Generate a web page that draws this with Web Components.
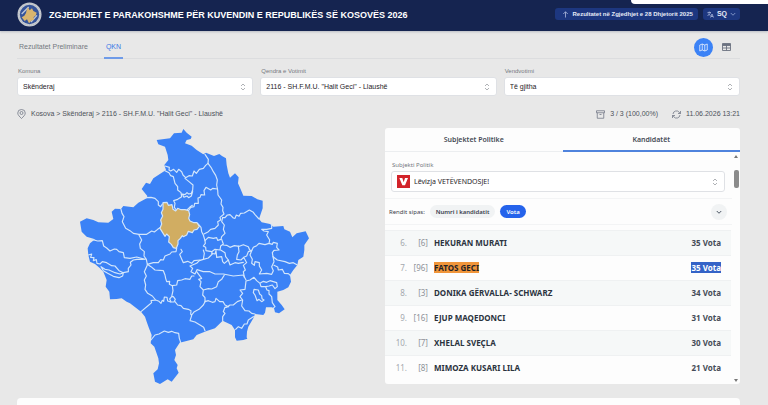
<!DOCTYPE html>
<html lang="sq">
<head>
<meta charset="utf-8">
<title>Zgjedhjet e Parakohshme për Kuvendin 2026</title>
<style>
html, body { margin: 0; height: 100%; }
body { background: #e8e8e8; font-family: "Liberation Sans", Arial, sans-serif; font-size: 7px; color: #4b5563; overflow: hidden; }
</style>
</head>
<body>
<results-page></results-page>

<template id="t-page">
<style>
:host { display: flex; flex-direction: column; min-height: 100vh; }
main { flex: 1; display: flex; flex-direction: column; padding: 0 28px 0 17px; }
.filters { display: grid; grid-template-columns: repeat(3, 1fr); gap: 7px; padding-top: 8px; }
.content { display: grid; grid-template-columns: 1fr 1fr; gap: 13px; }
.next { flex: 1; margin-top: 14px; background: #fdfdfd; border-radius: 4px 4px 0 0; min-height: 8px; }
.sheet { position: absolute; top: 0; right: 0; width: 137px; height: 4px; background: #fff; border-bottom-left-radius: 4px; }
</style>
<site-header></site-header>
<div class="sheet"></div>
<main>
  <view-tabs></view-tabs>
  <div class="filters">
    <filter-select label="Komuna" value="Skënderaj"></filter-select>
    <filter-select label="Qendra e Votimit" value='2116 - SH.F.M.U. "Halit Geci" - Llaushë'></filter-select>
    <filter-select label="Vendvotimi" value="Të gjitha"></filter-select>
  </div>
  <status-line></status-line>
  <div class="content">
    <kosovo-map></kosovo-map>
    <result-panel></result-panel>
  </div>
  <div class="next"></div>
</main>
</template>

<template id="t-header">
<style>
:host { display: flex; align-items: center; height: 31px; padding: 0 28px 0 17px; background: #152450; box-shadow: 0 1px 2px #8b90a080; box-sizing: border-box; color: #fff; }
.logo { width: 25px; height: 25px; flex: none; margin-top: -2px; }
h1 { flex: 1; margin: -2px 0 0 7px; font-size: 9px; line-height: 12px; font-weight: 700; white-space: nowrap; }
nav { display: flex; gap: 5px; margin-top: -3px; }
a, button { display: flex; align-items: center; height: 12px; box-sizing: border-box; border: 0; border-radius: 3px; background: #1d3780; color: #e6eaf5; text-decoration: none; font: 700 7px/12px "Liberation Sans", Arial, sans-serif; white-space: nowrap; }
a { padding: 0 5px 0 7px; gap: 4px; font-size: 6px; }
button { padding: 0 4px; gap: 3px; }
svg { flex: none; }
</style>
<svg class="logo" viewBox="0 0 75 75">
  <circle cx="37.500" cy="37.500" r="36" fill="#c9ccd0"/>
  <circle cx="37.500" cy="37.500" r="32" fill="none" stroke="#a3adbb" stroke-width="2" stroke-dasharray="3 3"/>
  <circle cx="37.500" cy="37.500" r="29" fill="#35549a"/>
  <path d="M14 36L35 15M60 40L42 60" stroke="#bcc6da" stroke-width="4"/>
  <path d="M33 16l5 9 7-6 4 8 10 5-3 9-6 4 1 8-8 3-7 8-6-12-7 5-9-11 8-5 5-8 2-9z" fill="#d9b56e"/>
</svg>
<h1>ZGJEDHJET E PARAKOHSHME PËR KUVENDIN E REPUBLIKËS SË KOSOVËS 2026</h1>
<nav>
  <a href="#2025"><svg width="7" height="7" viewBox="0 0 14 14" fill="none" stroke="#b9c4e4" stroke-width="1.500"><path d="M7 13V1.500M2.500 6L7 1.500 11.500 6"/></svg><span>Rezultatet në Zgjedhjet e 28 Dhjetorit 2025</span></a>
  <button type="button"><svg width="7" height="7" viewBox="0 0 14 14" fill="none" stroke="#b9c4e4" stroke-width="1.400"><path d="M1 3h7M4.500 1v2M7 3C6 6 4 8 1 9M2.500 5C4 7.500 5 8 7 9M7 13l3-7 3 7M8 11h4"/></svg><span>SQ</span><svg width="6" height="6" viewBox="0 0 12 12" fill="none" stroke="#9fb0dc" stroke-width="1.500"><path d="M1.500 4L6 8.500 10.500 4"/></svg></button>
</nav>
</template>

<template id="t-tabs">
<style>
:host { display: flex; align-items: stretch; height: 28px; box-sizing: border-box; border-bottom: 1px solid #dcdddf; }
a { display: flex; align-items: center; padding: 5px 2px 0; color: #74787f; text-decoration: none; font-size: 7px; line-height: 10px; border-bottom: 2px solid transparent; margin-bottom: -1px; box-sizing: border-box; white-space: nowrap; }
a + a { margin-left: 14px; }
a.on { color: #3b78e7; border-color: #6f9be8; }
.modes { margin-left: auto; display: flex; align-items: center; gap: 4px; padding: 5px 4px 0 0; }
button { width: 19px; height: 19px; border: 0; border-radius: 50%; padding: 0; display: grid; place-items: center; background: none; color: #6b7280; }
button.on { background: #3b82f6; color: #fff; }
</style>
<a href="#prelim">Rezultatet Preliminare</a>
<a href="#qkn" class="on">QKN</a>
<div class="modes">
  <button type="button" class="on" aria-label="Harta"><svg width="9" height="9" viewBox="0 0 18 18" fill="none" stroke="currentColor" stroke-width="1.400"><path d="M1.500 4l5-2 5 2 5-2v12l-5 2-5-2-5 2zM6.500 2v12M11.500 4v12"/></svg></button>
  <button type="button" aria-label="Tabela"><svg width="9" height="8" viewBox="0 0 18 16" fill="none" stroke="currentColor" stroke-width="1.800"><path d="M1 1h16v14H1zM1 5h16M1 10h16M9 2v13"/><path d="M1 3h16" stroke-width="3"/></svg></button>
</div>
</template>

<template id="t-select">
<style>
:host { display: flex; flex-direction: column; min-width: 0; --h: 19px; }
label { padding: 0 1px 2px; font-size: 6px; line-height: 8px; color: #74787f; }
.box { display: flex; align-items: center; gap: 4px; height: var(--h); box-sizing: border-box; padding: 0 6px 0 5px; background: #fff; border: 1px solid #dfe1e5; border-radius: 3px; }
select { flex: 1; min-width: 0; appearance: none; border: 0; padding: 0; margin: 0; background: none; color: #1f2328; font: inherit; font-size: 7px; line-height: 12px; }
svg { flex: none; }
</style>
<label for="s"></label>
<div class="box"><slot></slot><select id="s"><option></option></select><svg width="6" height="8" viewBox="0 0 12 16" fill="none" stroke="#8d9197" stroke-width="1.400"><path d="M2 6l4-4 4 4M2 10l4 4 4-4"/></svg></div>
</template>

<template id="t-status">
<style>
:host { display: flex; align-items: center; height: 32px; padding: 4px 0 0; box-sizing: border-box; font-size: 7px; line-height: 10px; color: #4c5159; white-space: nowrap; }
span { display: flex; align-items: center; gap: 5px; }
.right { margin-left: auto; gap: 14px; }
</style>
<span><svg width="9" height="10" viewBox="0 0 18 20" fill="none" stroke="#6b7280" stroke-width="1.500"><path d="M9 19C5 15 1.500 12 1.500 8a7.500 7 0 0 1 15 0c0 4-3.500 7-7.500 11z"/><circle cx="9" cy="8" r="3"/></svg>Kosova &gt; Skënderaj &gt; 2116 - SH.F.M.U. "Halit Geci" - Llaushë</span>
<span class="right">
  <span><svg width="9" height="9" viewBox="0 0 18 18" fill="none" stroke="#6b7280" stroke-width="1.500"><path d="M1 1.500h16v4H1zM2.500 5.500V16.500h13V5.500M7 9h4"/></svg>3 / 3 (100,00%)</span>
  <span><svg width="9" height="9" viewBox="0 0 18 18" fill="none" stroke="#6b7280" stroke-width="1.500"><path d="M2 8a7 7 0 0 1 12.500-3.500L17 7M17 2v5h-5M16 10a7 7 0 0 1-12.500 3.500L1 11M1 16v-5h5"/></svg>11.06.2026 13:21</span>
</span>
</template>

<template id="t-map">
<style>
:host { display: flex; justify-content: center; align-items: flex-start; }
svg { width: 240px; max-width: 100%; }
</style>
<svg viewBox="0 24 720 768" role="img" aria-label="Harta e komunave">
<path fill="#3b82f6" d="M325 27L335 38 350 50 347 57 335 60 330 70 350 77 365 90 385 103 393 98 417 108 433 102 441 108 453 115 455 135 460 160 465 173 480 160 491 172 489 190 497 208 505 227 530 228 547 238 563 242 563 265 552 297 560 307 585 312 595 320 625 318 628 328 645 335 652 352 665 340 692 334 702 355 688 375 688 390 685 410 670 420 667 435 655 450 645 465 648 485 640 502 625 510 607 515 607 540 620 555 629 568 612 580 600 577 597 565 590 562 573 562 570 578 565 585 540 582 535 595 520 620 516 635 515 652 517 656 505 660 485 662 480 652 480 630 470 615 443 602 420 625 395 633 365 645 355 658 320 667 315 667 300 690 303 705 298 720 308 735 305 745 311 758 290 785 278 778 255 792 240 785 235 760 248 748 252 730 250 715 238 680 227 670 230 645 222 625 215 605 210 590 198 575 165 550 155 545 140 535 125 537 105 538 103 515 92 500 95 480 85 455 75 445 60 432 45 425 40 405 38 385 45 370 60 358 35 350 20 335 15 305 35 295 55 300 70 307 100 308 115 297 110 275 120 266 138 267 145 258 175 262 190 248 215 235 217 228 200 207 213 188 225 192 235 175 265 155 273 150 268 135 280 120 278 105 270 80 250 73 245 60 285 55 297 40 320 38Z"/>
<g fill="none" stroke="#d3e6fb" stroke-width="3.500" stroke-linejoin="round" stroke-linecap="round">
<path d="M270 138L283 142 282 150 287 153 296 148 305 157 311 148 320 155 324 165 332 173 342 167 352 168 357 153 364 160 373 148 385 145 392 136 399 130 400 118 390 103"/>
<path d="M399 130L408 142 415 155 422 166 427 180 425 195 428 210 429 225 440 240 438 252 444 262 443 272 447 282 435 292 437 300 428 305 430 315 420 325 407 328 400 335 387 342"/>
<path d="M427 207L413 205 407 210 393 202 387 212 389 225 378 224 375 232 369 234 370 250 359 250 357 260 347 262 342 270"/>
<path d="M270 152L282 158 287 167 295 170 300 190 308 200 308 210 318 218 320 230 308 238 296 242 300 250 298 262 304 270M330 175L342 185 354 195 353 210 349 220 341 222 336 218 330 224 322 222M322 222L327 232 336 228 341 233 349 228 353 215"/>
<path d="M213 233L228 232 240 235 250 245 250 255 257 260 262 252M138 268L141 280 147 290 142 305 152 325 165 332 175 340 192 343 215 343 230 333 238 336 248 328 257 322M336 270L344 262 352 256"/>
<path d="M192 345L200 360 194 372 196 385 208 395 207 408 214 418 217 433M50 358L68 363 82 362 86 378 95 384 105 393 118 387 125 388 132 395 145 398 148 413 165 415 185 411 210 418M217 433L235 428 250 428 257 419 265 420 270 408 285 402 290 396 303 395 305 385"/>
<path d="M318 388L322 395 314 403 317 410 325 428 338 424 350 430 357 422 375 420M217 433L228 440 240 450 265 452 270 465 272 475 275 485 284 484 283 493 292 497 305 495 308 482 320 480 330 476 345 478 350 468 357 468M292 497L294 512 290 530M290 530L284 537 288 546 297 546 301 538 295 530Z"/>
<path d="M217 435L208 455 214 468 208 480 212 495 210 508 218 520 232 528 242 540 228 542 230 548 218 558 198 575M242 540L252 544 258 550 262 541 266 544 268 531 276 532 278 543 287 546M300 545L308 555 318 557 325 565 340 568 348 572 347 582 350 587 345 602 360 606 375 615 386 622 390 632M350 585L358 575 372 568 385 555 390 545"/>
<path d="M40 405L50 402 47 412 57 413 55 422 64 419 66 430 75 432 82 425 95 428 110 437 120 438 132 452 145 458 160 455 160 445 168 435 166 427 175 420 186 418 205 418M78 440L90 448 102 450 120 458 135 462 145 458 143 468 132 473 115 469 98 460 85 452ZM228 660L240 645 252 642 268 633 280 637 290 634 300 638 311 640 313 655 317 667"/>
<path d="M443 292L450 293 457 285 465 284 475 294 480 295 484 285 492 289 497 280 508 279 523 270 535 277 540 284 552 297M443 292L440 305 448 315 445 328 450 340 440 350 438 358 428 361 425 353 415 355 400 352 390 362 385 345 380 335 378 322 370 312"/>
<path d="M390 362L391 370 385 378 392 382 393 392 410 395 420 388 435 390 437 378 445 372 440 358M445 375L455 376 465 382 478 377 493 379 505 374 520 380 524 390 530 392 535 382 545 377 552 370 570 374 582 370 584 360 575 345 580 335 567 333 560 328 575 328 590 325 590 312M582 370L592 373 595 367 607 370 605 382 612 390 597 391 592 398 594 410 607 420 630 425 643 430 655 428 667 435"/>
<path d="M345 438L365 430 373 422 385 418 388 400 385 390M345 438L353 445 348 455 360 462 366 449 385 455 405 455 420 462 445 462 475 468 505 465 513 480M385 418L400 414 412 402 410 395M410 400L420 402 423 392 425 412 440 410 443 425 448 430 460 420 465 435 480 428 490 430 505 427"/>
<path d="M437 390L450 398 452 410 460 420M490 378L492 395 487 405 485 418 498 420 506 412 515 408 520 395 530 392M506 412L515 428 505 436 511 450 505 455 508 472M530 392L525 405 532 418 530 430 538 436 540 425 553 428 553 438 560 450 553 462 575 460 590 463 595 452 590 440 597 425 594 410"/>
<path d="M597 436L608 441 610 450 622 448 628 460 640 461 648 468M365 455L380 475 371 478 378 485 375 500 385 510 400 506 410 507 425 500 430 485 440 478 448 465M385 510L383 525 390 533 390 545 400 542 412 547 420 545 423 535 434 545 444 545 450 555 461 560 450 562 445 575 450 580 443 590 443 602M455 562L465 555 475 555 487 545 500 540"/>
<path d="M513 483L510 508 495 510 503 520 495 530 503 540 500 558 510 572 522 573 530 580 540 582M513 483L525 480 537 472 545 482 555 490 558 500 572 500 576 510 582 512 582 522 590 530 592 548 600 560 594 565M555 490L565 484 575 487 585 482 605 488 607 500 600 506 592 495 582 498 572 500M482 628L490 620 500 625 508 612 516 612 520 600 535 590"/>
<path d="M537 508L550 510 554 522 560 527 561 536 567 540 560 545 552 538 546 542 540 525 535 518Z"/>
</g>
<path fill="#d1ad62" stroke="#d3e6fb" stroke-width="3.500" stroke-linejoin="round" d="M264 248L276 247 280 256 291 254 294 268 302 273 308 265 318 269 330 269 341 272 344 284 341 295 345 303 357 308 366 308 373 319 366 328 357 330 352 338 340 334 335 345 325 350 322 347 316 355 309 362 309 372 304 385 295 383 289 373 281 366 283 350 275 342 270 349 263 338 255 325 260 312 257 300 263 288 259 278 264 268Z"/>
</svg>
</template>

<template id="t-panel">
<style>
:host { display: flex; flex-direction: column; background: #fdfdfd; font-family: "Noto Sans", "Open Sans", sans-serif; color: #3a414c; border-radius: 3px; overflow: hidden; }
.tabs { display: grid; grid-template-columns: 1fr 1fr; }
.tabs button { height: 24px; border: 0; border-bottom: 1px solid #eceef0; background: none; padding: 1px 0 0; font: 600 7px/12px "Noto Sans", sans-serif; color: #454b56; }
.tabs button.on { border-bottom: 2px solid #4f83dd; }
.scroll { display: flex; flex: 1; }
.body { flex: 1; min-width: 0; }
.pick { padding: 9px 7px 6px 6px; }
.pick filter-select { --h: 21px; }
.sort { display: flex; align-items: center; gap: 5px; height: 27px; padding: 0 5px 0 4px; border-top: 1px solid #f3f4f5; border-bottom: 1px solid #f3f4f5; box-sizing: border-box; font-size: 6px; line-height: 10px; white-space: nowrap; }
.sort button { height: 13px; border: 0; border-radius: 7px; padding: 0 6px; background: #f1f3f4; color: #3a414c; font: 600 6px/12px "Noto Sans", sans-serif; }
.sort button.on { background: #2563eb; color: #fff; }
.sort button.more { width: 16px; height: 16px; padding: 0; margin-left: auto; border-radius: 50%; display: grid; place-items: center; }
.bar { display: flex; flex-direction: column; align-items: center; width: 8px; padding: 3px 0 2px; box-sizing: border-box; }
.thumb { width: 5px; height: 18px; margin-top: 12px; border-radius: 2px; background: #8b8b8b; }
.bar svg:last-child { margin-top: auto; }
</style>
<div class="tabs"><button type="button">Subjektet Politike</button><button type="button" class="on">Kandidatët</button></div>
<div class="scroll">
  <div class="body">
    <div class="pick"><filter-select label="Subjekti Politik" value="Lëvizja VETËVENDOSJE!"><svg width="13" height="13" viewBox="0 0 39 39"><path fill="#d2232a" d="M0 0h39v39H0z"/><path fill="#fff" d="M7 9h9l4 13 4-13h9l-9 22h-8z"/></svg></filter-select></div>
    <div class="sort"><span>Rendit sipas:</span><button type="button">Numri i kandidatit</button><button type="button" class="on">Vota</button><button type="button" class="more" aria-label="Më shumë"><svg width="6" height="6" viewBox="0 0 12 12" fill="none" stroke="#4b5563" stroke-width="2"><path d="M1.500 4L6 8.500 10.500 4"/></svg></button></div>
    <candidate-list></candidate-list>
  </div>
  <div class="bar"><svg width="4" height="3" viewBox="0 0 8 6"><path fill="#777" d="M0 6l4-6 4 6z"/></svg><div class="thumb"></div><svg width="4" height="3" viewBox="0 0 8 6"><path fill="#777" d="M0 0l4 6 4-6z"/></svg></div>
</div>
</template>

<template id="t-list">
<style>
:host { display: block; padding: 5px 1px 3px 0; }
table { width: 100%; border-collapse: separate; border-spacing: 0; font-size: 8px; line-height: 12px; }
td { height: 25px; padding: 0; box-sizing: border-box; border-top: 1px solid #eff1f2; white-space: nowrap; vertical-align: middle; }
tr:nth-child(odd) td { background: #f6f8f8; }
.rank { width: 22px; text-align: right; color: #a4a8ae; }
.num { width: 21px; text-align: right; color: #8e9299; }
.name { padding-left: 6px; font-weight: 700; color: #2b333e; }
.votes { padding-right: 10px; text-align: right; font-weight: 700; color: #454c57; }
mark { background: #f0953a; color: #1f2328; }
.votes mark { background: #3463c7; color: #fff; }
</style>
<table><tbody></tbody></table>
</template>

<script>
const attach = (el, id) => {
  const root = el.attachShadow({ mode: "open" });
  root.append(document.getElementById(id).content.cloneNode(true));
  return root;
};
const simple = (tag, id) => customElements.define(tag, class extends HTMLElement {
  constructor() { super(); attach(this, id); }
});

customElements.define("filter-select", class extends HTMLElement {
  connectedCallback() {
    if (this.shadowRoot) return;
    const root = attach(this, "t-select");
    root.querySelector("label").textContent = this.getAttribute("label");
    root.querySelector("option").textContent = this.getAttribute("value");
  }
});

const candidates = [
  [6, 6, "HEKURAN MURATI", 35],
  [7, 96, "FATOS GECI", 35, true],
  [8, 3, "DONIKA GËRVALLA- SCHWARZ", 34],
  [9, 16, "EJUP MAQEDONCI", 31],
  [10, 7, "XHELAL SVEÇLA", 30],
  [11, 8, "MIMOZA KUSARI LILA", 21]
];
customElements.define("candidate-list", class extends HTMLElement {
  connectedCallback() {
    if (this.shadowRoot) return;
    const body = attach(this, "t-list").querySelector("tbody");
    const wrap = (text, on) => on ? `<mark>${text}</mark>` : text;
    body.innerHTML = candidates.map(([rank, num, name, votes, on]) =>
      `<tr><td class="rank">${rank}.</td><td class="num">[${num}]</td><td class="name">${wrap(name, on)}</td><td class="votes">${wrap(votes + " Vota", on)}</td></tr>`
    ).join("");
  }
});

simple("site-header", "t-header");
simple("view-tabs", "t-tabs");
simple("status-line", "t-status");
simple("kosovo-map", "t-map");
simple("result-panel", "t-panel");
simple("results-page", "t-page");
</script>
</body>
</html>
